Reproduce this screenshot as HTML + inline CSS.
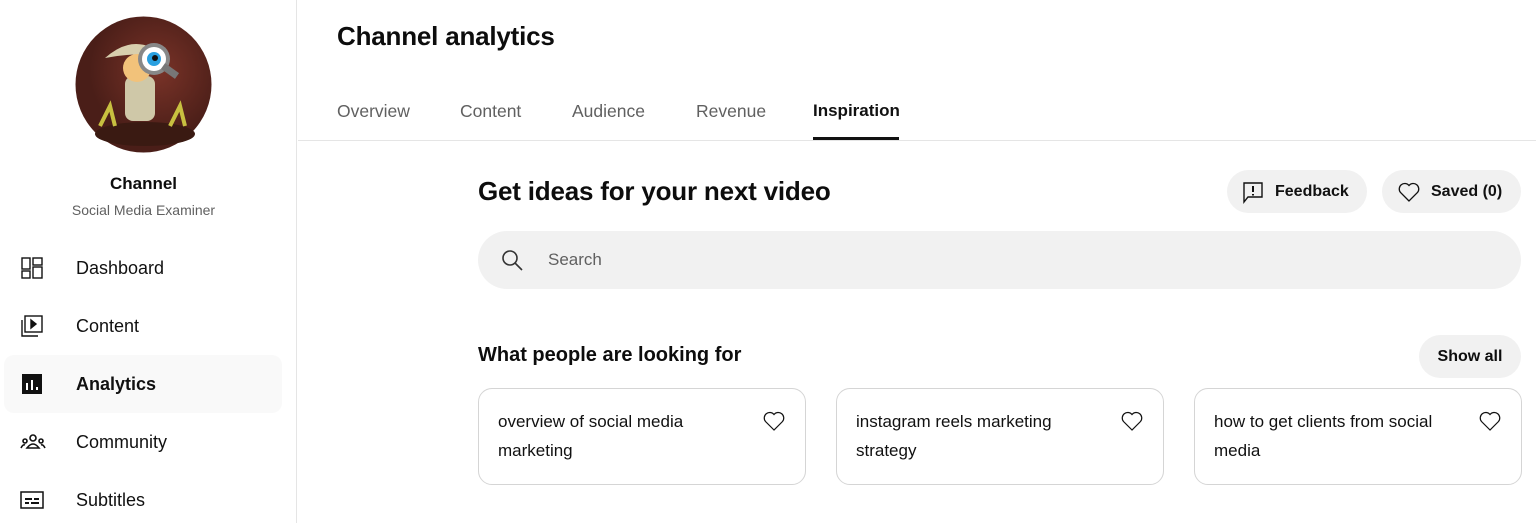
<!DOCTYPE html><html><head><style>
*{margin:0;padding:0;box-sizing:border-box}
body{width:1536px;height:523px;overflow:hidden;background:#fff;font-family:"Liberation Sans",sans-serif;color:#0d0d0d;position:relative}
.a{position:absolute}
.side{left:0;top:0;width:297px;height:523px;border-right:1px solid #e5e5e5}
.nav{left:4px;width:278px;height:58px;display:flex;align-items:center;font-size:18px;color:#111}
.nav svg{position:absolute;left:16px}
.nav span{position:absolute;left:72px}
.tab{top:101px;font-size:17.5px;color:#606060}
.btn{background:#f1f1f1;border-radius:22px;height:43px;top:170px;display:flex;align-items:center;font-size:16px;font-weight:bold;color:#111}
.card{top:388px;height:97px;border:1px solid #d5d5d5;border-radius:14px;width:328px;padding:18px 70px 18px 19px;font-size:17px;line-height:29px;color:#111}
.card svg{position:absolute;right:19px;top:20px}
</style></head><body>
<div class="a side"></div>
<svg class="a" style="left:75px;top:16px" width="137" height="137" viewBox="0 0 137 137">
<defs><radialGradient id="g" cx="0.6" cy="0.4"><stop offset="0" stop-color="#7a3328"/><stop offset="1" stop-color="#4a1e18"/></radialGradient></defs>
<circle cx="68.5" cy="68.5" r="68" fill="url(#g)"/>
<ellipse cx="70" cy="118" rx="50" ry="12" fill="#3a1a12"/>
<path d="M30 42 Q60 15 90 40 Q60 36 30 42Z" fill="#d8cfae"/>
<rect x="50" y="60" width="30" height="45" rx="8" fill="#cfc8a8"/>
<circle cx="62" cy="52" r="14" fill="#f2c27a"/>
<circle cx="79" cy="43" r="16" fill="#888"/><circle cx="79" cy="43" r="12" fill="#fff"/><circle cx="79" cy="43" r="7" fill="#2aa0e0"/><circle cx="80" cy="42" r="3" fill="#111"/>
<path d="M88 50 L102 60" stroke="#777" stroke-width="7"/>
<path d="M25 110 L35 90 L40 110 M95 110 L105 90 L110 110" stroke="#c8c040" stroke-width="4" fill="none"/>
</svg>
<div class="a" style="left:0;width:287px;top:174px;text-align:center;font-size:17px;font-weight:bold">Channel</div>
<div class="a" style="left:0;width:287px;top:202px;text-align:center;font-size:14px;color:#606060">Social Media Examiner</div>
<div class="a nav" style="top:239px"><svg width="24" height="24" viewBox="0 0 24 24" fill="none" stroke="#111" stroke-width="1.4"><rect x="2" y="2" width="8" height="11"/><rect x="2" y="15" width="8" height="7"/><rect x="13" y="2" width="9" height="7"/><rect x="13" y="11" width="9" height="11"/></svg><span>Dashboard</span></div>
<div class="a nav" style="top:297px"><svg width="24" height="24" viewBox="0 0 24 24" fill="none" stroke="#111" stroke-width="1.4"><rect x="5" y="2" width="17" height="16"/><path d="M2 6V22H18"/><path d="M11 6L16 10L11 14Z" fill="#111"/></svg><span>Content</span></div>
<div class="a nav" style="top:355px;background:#f9f9f9;border-radius:10px;font-weight:bold"><svg width="24" height="24" viewBox="0 0 24 24"><rect x="2" y="2" width="20" height="20" fill="#111"/><path d="M7 11V18M12 8V18M17 15V18" stroke="#fff" stroke-width="2"/></svg><span>Analytics</span></div>
<div class="a nav" style="top:413px"><svg width="26" height="24" viewBox="0 0 26 24" fill="none" stroke="#111" stroke-width="1.6"><circle cx="13" cy="8" r="3"/><path d="M7 18Q13 10 19 18Z"/><circle cx="5" cy="11" r="2"/><circle cx="21" cy="11" r="2"/><path d="M1 18Q3 14 5 15M25 18Q23 14 21 15"/></svg><span>Community</span></div>
<div class="a nav" style="top:471px"><svg width="24" height="24" viewBox="0 0 24 24" fill="none" stroke="#111" stroke-width="1.5"><rect x="1" y="4" width="22" height="16"/><path d="M5 11H12M14 11H19M5 15H9M11 15H19" stroke-width="2"/></svg><span>Subtitles</span></div>
<div class="a" style="left:337px;top:21px;font-size:26px;font-weight:bold;letter-spacing:-0.2px">Channel analytics</div>
<div class="a tab" style="left:337px">Overview</div>
<div class="a tab" style="left:460px">Content</div>
<div class="a tab" style="left:572px">Audience</div>
<div class="a tab" style="left:696px">Revenue</div>
<div class="a tab" style="left:813px;color:#111;font-weight:bold;font-size:17px">Inspiration</div>
<div class="a" style="left:813px;top:137px;width:86px;height:3px;background:#111"></div>
<div class="a" style="left:298px;top:140px;width:1238px;height:1px;background:#e5e5e5"></div>
<div class="a" style="left:478px;top:176px;font-size:26px;font-weight:bold;letter-spacing:-0.2px">Get ideas for your next video</div>
<div class="a btn" style="left:1227px;width:140px"><svg style="margin-left:14px" width="24" height="24" viewBox="0 0 24 24" fill="none" stroke="#111" stroke-width="1.4"><path d="M3 3H21V17H7L3 22Z"/><path d="M12 6V12M12 14V15.5" stroke-width="2"/></svg><span style="margin-left:10px">Feedback</span></div>
<div class="a btn" style="left:1382px;width:139px"><svg style="margin-left:14px" width="26" height="24" viewBox="0 0 24 24" fill="none" stroke="#111" stroke-width="1.3"><path d="M12 21L3.5 12.5A5 5 0 0 1 12 5.5A5 5 0 0 1 20.5 12.5Z"/></svg><span style="margin-left:9px">Saved (0)</span></div>
<div class="a" style="left:478px;top:231px;width:1043px;height:58px;background:#f1f1f1;border-radius:29px"></div>
<svg class="a" style="left:500px;top:248px" width="24" height="24" viewBox="0 0 24 24" fill="none" stroke="#333" stroke-width="1.6"><circle cx="10" cy="10" r="7"/><path d="M15 15L22 22"/></svg>
<div class="a" style="left:548px;top:250px;font-size:17px;color:#606060">Search</div>
<div class="a" style="left:478px;top:344px;font-size:20px;font-weight:bold">What people are looking for</div>
<div class="a" style="left:1419px;top:335px;width:102px;height:43px;background:#f1f1f1;border-radius:22px;font-size:16px;font-weight:bold;text-align:center;line-height:43px">Show all</div>
<div class="a card" style="left:478px">overview of social media marketing<svg width="24" height="24" viewBox="0 0 24 24" fill="none" stroke="#111" stroke-width="1.2"><path d="M12 21L3.5 12.5A5 5 0 0 1 12 5.5A5 5 0 0 1 20.5 12.5Z"/></svg></div>
<div class="a card" style="left:836px">instagram reels marketing strategy<svg width="24" height="24" viewBox="0 0 24 24" fill="none" stroke="#111" stroke-width="1.2"><path d="M12 21L3.5 12.5A5 5 0 0 1 12 5.5A5 5 0 0 1 20.5 12.5Z"/></svg></div>
<div class="a card" style="left:1194px;width:328px">how to get clients from social media<svg width="24" height="24" viewBox="0 0 24 24" fill="none" stroke="#111" stroke-width="1.2"><path d="M12 21L3.5 12.5A5 5 0 0 1 12 5.5A5 5 0 0 1 20.5 12.5Z"/></svg></div>
</body></html>
